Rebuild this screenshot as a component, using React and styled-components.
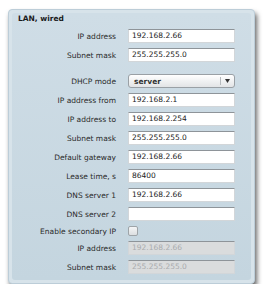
import React from 'react';
import styled, { createGlobalStyle } from 'styled-components';

const GlobalStyle = createGlobalStyle`
	body {
		margin: 0;
		background: #ffffff;
		font-family: "DejaVu Sans", Verdana, sans-serif;
	}
`;

const Panel = styled.div`
	margin: 9px 0 0 8px;
	width: 247px;
	height: 275px;
	box-sizing: border-box;
	border-radius: 4px;
	background: #d7e3ea;
	border: 1px solid #bccdd8;
	padding: 3px;
	box-shadow: 2px 4px 5px rgba(0, 0, 0, 0.6);
`;

const Inner = styled.div`
	height: 100%;
	box-sizing: border-box;
	border-radius: 3px;
	background: linear-gradient(#cfdde6, #c4d5df);
`;

const Title = styled.div`
	font-size: 7.5px;
	font-weight: bold;
	color: #1a1a1a;
	padding-left: 6px;
	height: 12px;
	line-height: 12px;
`;

const Form = styled.div`
	display: flex;
	flex-direction: column;
	gap: 5px;
	margin-top: 4px;
`;

const Row = styled.div`
	display: grid;
	grid-template-columns: 104px 107px;
	column-gap: 12px;
	align-items: center;
	margin-top: ${(p) => (p.$spaced ? '7px' : '0')};
`;

const Label = styled.div`
	text-align: right;
	font-size: 7.5px;
	color: #2a2a2a;
	white-space: nowrap;
`;

const Input = styled.div`
	height: 14px;
	box-sizing: border-box;
	border: 1px solid #d2d6d9;
	border-top-color: #8e9499;
	background: ${(p) => (p.$disabled ? '#dadcdd' : '#ffffff')};
	color: ${(p) => (p.$disabled ? '#a9abad' : '#222')};
	font-size: 7.5px;
	line-height: 12px;
	padding-left: 3px;
`;

const Select = styled.div`
	height: 14px;
	box-sizing: border-box;
	border: 1px solid #9aa0a5;
	border-radius: 3px;
	background: linear-gradient(#ffffff, #e2e4e6);
	display: flex;
	align-items: center;
	font-size: 7.5px;
	font-weight: bold;
	color: #333;
`;

const SelectValue = styled.div`
	flex: 1;
	padding-left: 5px;
`;

const Arrow = styled.div`
	width: 13px;
	height: 8px;
	border-left: 1px solid #b6babd;
	display: flex;
	align-items: center;
	justify-content: center;
`;

const Checkbox = styled.div`
	width: 10px;
	height: 10px;
	box-sizing: border-box;
	border: 1px solid #9ea4a8;
	border-radius: 2px;
	background: linear-gradient(#f4f5f6, #dcdfe1);
`;

const fields = [
	{ label: 'IP address', value: '192.168.2.66' },
	{ label: 'Subnet mask', value: '255.255.255.0' },
];

const dhcpFields = [
	{ label: 'IP address from', value: '192.168.2.1' },
	{ label: 'IP address to', value: '192.168.2.254' },
	{ label: 'Subnet mask', value: '255.255.255.0' },
	{ label: 'Default gateway', value: '192.168.2.66' },
	{ label: 'Lease time, s', value: '86400' },
	{ label: 'DNS server 1', value: '192.168.2.66' },
	{ label: 'DNS server 2', value: '' },
];

const secondaryFields = [
	{ label: 'IP address', value: '192.168.2.66' },
	{ label: 'Subnet mask', value: '255.255.255.0' },
];

export default function App() {
	return (
		<>
			<GlobalStyle />
			<Panel>
				<Inner>
					<Title>LAN, wired</Title>
					<Form>
						{fields.map((f, i) => (
							<Row key={'a' + i}>
								<Label>{f.label}</Label>
								<Input>{f.value}</Input>
							</Row>
						))}
						<Row $spaced>
							<Label>DHCP mode</Label>
							<Select>
								<SelectValue>server</SelectValue>
								<Arrow>
									<svg width="5" height="4" viewBox="0 0 5 4">
										<path d="M0 0 L5 0 L2.5 4 Z" fill="#333" />
									</svg>
								</Arrow>
							</Select>
						</Row>
						{dhcpFields.map((f, i) => (
							<Row key={'b' + i}>
								<Label>{f.label}</Label>
								<Input>{f.value}</Input>
							</Row>
						))}
						<Row>
							<Label>Enable secondary IP</Label>
							<Checkbox />
						</Row>
						{secondaryFields.map((f, i) => (
							<Row key={'c' + i}>
								<Label>{f.label}</Label>
								<Input $disabled>{f.value}</Input>
							</Row>
						))}
					</Form>
				</Inner>
			</Panel>
		</>
	);
}
